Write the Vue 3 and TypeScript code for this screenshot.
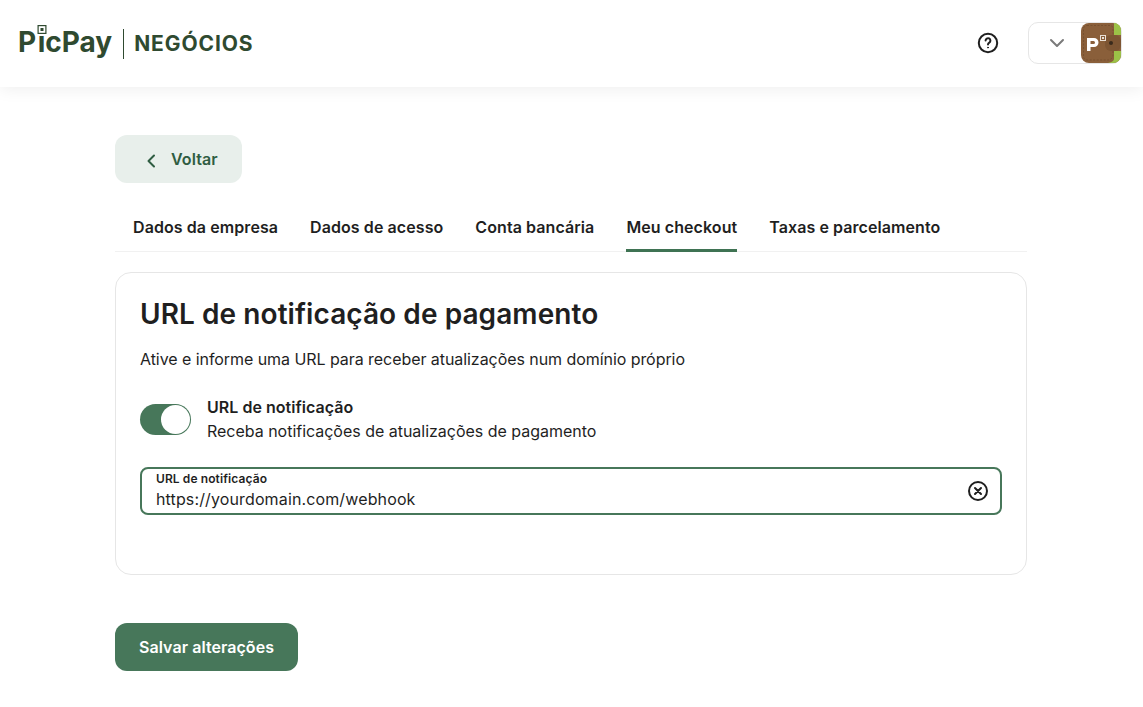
<script setup lang="ts">
const tabs: { label: string; active?: boolean }[] = [
  { label: 'Dados da empresa' },
  { label: 'Dados de acesso' },
  { label: 'Conta bancária' },
  { label: 'Meu checkout', active: true },
  { label: 'Taxas e parcelamento' },
]
</script>

<template>
  <div class="page">
    <header class="topbar">
      <div class="logo">
        <span class="wordmark">P<span class="i">ı<svg class="qr" viewBox="0 0 10 11" width="10" height="11"><rect x="0" y="0" width="10" height="11" fill="#fff"/><rect x="1.1" y="0.6" width="7.8" height="7.8" fill="none" stroke="#2f4a30" stroke-width="1.2"/><rect x="3.5" y="3" width="3" height="3" fill="#2f4a30"/></svg></span>cPay</span>
        <span class="divider"></span>
        <span class="negocios">NEGÓCIOS</span>
      </div>
      <div class="actions">
        <svg class="help" width="24" height="24" viewBox="0 0 24 24" fill="none" stroke="#1f1f1f" stroke-width="2" stroke-linecap="round">
          <circle cx="12" cy="12" r="9.2" />
          <path d="M9.6 9.6a2.4 2.4 0 1 1 3.7 2c-.8.5-1.3 1-1.3 1.9" />
          <circle cx="12" cy="16.6" r="0.5" fill="#1f1f1f" stroke-width="1" />
        </svg>
        <div class="account">
          <span class="chev">
            <svg width="16" height="10" viewBox="0 0 16 10" fill="none" stroke="#7a7a7a" stroke-width="2" stroke-linecap="round" stroke-linejoin="round"><path d="M2 2l6 6 6-6" /></svg>
          </span>
          <svg class="wallet" width="40" height="40" viewBox="0 0 40 40">
            <rect width="40" height="40" rx="8" fill="#8a5f3a" />
            <path d="M33 0h0a7 7 0 0 1 7 7v25a8 8 0 0 1-8 8h-5c2-.5 6-1.500 6-4v-8h7V12h-7z" fill="#9cc247" />
            <path d="M6 2.500h23a3 3 0 0 1 3 3V12M32 28v4a5 5 0 0 1-5 5H6a3.500 3.500 0 0 1-3.500-3.500V6A3.500 3.500 0 0 1 6 2.500" fill="none" stroke="#6f4b2b" stroke-width="0.7" stroke-dasharray="2 1.500" />
            <rect x="24" y="12" width="16" height="16" rx="6" fill="#7d5533" />
            <circle cx="30" cy="20" r="2" fill="#3a2a1c" />
            <rect x="19.500" y="12.500" width="5" height="5" fill="none" stroke="#e9e0d6" stroke-width="1" />
            <rect x="21" y="14" width="2" height="2" fill="#e9e0d6" />
            <path d="M6 28V15h7a4.500 4.500 0 0 1 0 9H9.500v4z M9.500 18v3h3a1.500 1.500 0 0 0 0-3z" fill="#fff" fill-rule="evenodd" />
          </svg>
        </div>
      </div>
    </header>

    <main class="content">
      <button class="back" type="button">
        <svg class="back-icon" width="10" height="14" viewBox="0 0 10 14" fill="none" stroke="#2f5d42" stroke-width="2" stroke-linecap="round" stroke-linejoin="round"><path d="M8 1.500L2.500 7 8 12.500" /></svg>
        <span>Voltar</span>
      </button>

      <nav class="tabs">
        <a v-for="t in tabs" :key="t.label" class="tab" :class="{ active: t.active }">{{ t.label }}</a>
      </nav>

      <section class="card">
        <h1>URL de notificação de pagamento</h1>
        <p class="lead">Ative e informe uma URL para receber atualizações num domínio próprio</p>

        <div class="switch-row">
          <span class="switch"><span class="knob"></span></span>
          <div class="switch-text">
            <strong>URL de notificação</strong>
            <span>Receba notificações de atualizações de pagamento</span>
          </div>
        </div>

        <div class="field">
          <div class="field-text">
            <label>URL de notificação</label>
            <span class="value">https://yourdomain.com/webhook</span>
          </div>
          <svg width="22" height="22" viewBox="0 0 22 22" fill="none" stroke="#1f1f1f" stroke-width="2" stroke-linecap="round">
            <circle cx="11" cy="11" r="9" />
            <path d="M8 8l6 6M14 8l-6 6" />
          </svg>
        </div>
      </section>

      <button class="save" type="button">Salvar alterações</button>
    </main>
  </div>
</template>

<style>
html, body { margin: 0; background: #fff; }
</style>

<style scoped>
.page {
  min-height: 707px;
  font-family: Inter, "Liberation Sans", sans-serif;
  color: #1f1f1f;
  background: #fff;
}
.topbar {
  height: 87px;
  display: flex;
  align-items: center;
  justify-content: space-between;
  padding: 0 21px 0 18px;
  box-shadow: 0 2px 16px rgba(0, 0, 0, 0.07);
}
.logo { display: flex; align-items: center; color: #2f4a30; }
.wordmark {
  font-family: Inter, sans-serif;
  font-weight: 700;
  font-size: 28px;
  line-height: 30px;
  margin-bottom: 3px;
}
.i { position: relative; margin-left: 1.5px; }
.qr { position: absolute; left: -0.5px; top: 0; }
.divider { width: 1px; height: 30px; background: #2f4a30; margin: 0 10px 0 11px; }
.negocios {
  font-family: Inter, sans-serif;
  font-weight: 700;
  font-size: 21px;
  letter-spacing: 0.9px;
}
.actions { display: flex; align-items: center; gap: 28px; margin-top: -1px; }
.account {
  height: 40px;
  width: 72px;
  border: 1px solid #e6e6e6;
  border-radius: 10px;
  display: flex;
  align-items: center;
  justify-content: space-between;
  padding-left: 20px;
  box-sizing: content-box;
}
.chev { display: flex; }
.wallet { display: block; }
.content {
  width: 912px;
  margin: 0 0 0 115px;
  padding-top: 48px;
}
.back {
  width: 127px;
  height: 48px;
  border: 0;
  border-radius: 12px;
  background: #e8efeb;
  color: #2f5d42;
  font: 600 16px Inter, sans-serif;
  letter-spacing: 0.1px;
  display: flex;
  align-items: center;
  gap: 15px;
  padding: 0 0 0 31px;
}
.back-icon { margin-top: 3px; }
.tabs {
  display: flex;
  gap: 32px;
  padding: 0 18px;
  margin-top: 20px;
  height: 49px;
  border-bottom: 1px solid #f1f1f1;
  box-sizing: border-box;
}
.tab {
  font-size: 16px;
  font-weight: 600;
  letter-spacing: 0.08px;
  line-height: 48px;
  height: 49px;
  box-sizing: border-box;
  color: #1f1f1f;
}
.tab.active { border-bottom: 3px solid #3f7353; }
.card {
  margin-top: 20px;
  height: 303px;
  box-sizing: border-box;
  border: 1px solid #e6e6e6;
  border-radius: 16px;
  padding: 23px 24px 0;
}
h1 {
  margin: 0;
  font-size: 28px;
  line-height: 36px;
  font-weight: 600;
  letter-spacing: 0.07px;
}
.lead {
  margin: 15px 0 0;
  font-size: 16px;
  line-height: 24px;
  letter-spacing: -0.06px;
}
.switch-row { display: flex; gap: 16px; margin-top: 24px; }
.switch {
  width: 51px;
  height: 31px;
  margin-top: 9px;
  box-sizing: border-box;
  border-radius: 16px;
  background: #47775a;
  position: relative;
}
.knob {
  position: absolute;
  right: 1px;
  top: 1px;
  width: 29px;
  height: 29px;
  border-radius: 50%;
  background: #fff;
}
.switch-text { display: flex; flex-direction: column; font-size: 16px; line-height: 24px; letter-spacing: -0.02px; }
.switch-text strong { font-weight: 600; letter-spacing: 0.03px; }
.field {
  margin-top: 24px;
  height: 48px;
  box-sizing: border-box;
  border: 2px solid #47775a;
  border-radius: 8px;
  display: flex;
  align-items: center;
  justify-content: space-between;
  padding: 0 11px 0 14px;
}
.field-text { display: flex; flex-direction: column; gap: 2px; }
label { font-size: 12px; font-weight: 600; line-height: 14px; letter-spacing: 0.1px; }
.value { font-size: 16px; line-height: 22px; letter-spacing: 0.13px; }
.save {
  margin-top: 48px;
  width: 183px;
  height: 48px;
  border: 0;
  border-radius: 12px;
  background: #47775a;
  color: #fff;
  font: 600 16px Inter, sans-serif;
  letter-spacing: 0.06px;
  padding: 0;
}
</style>
